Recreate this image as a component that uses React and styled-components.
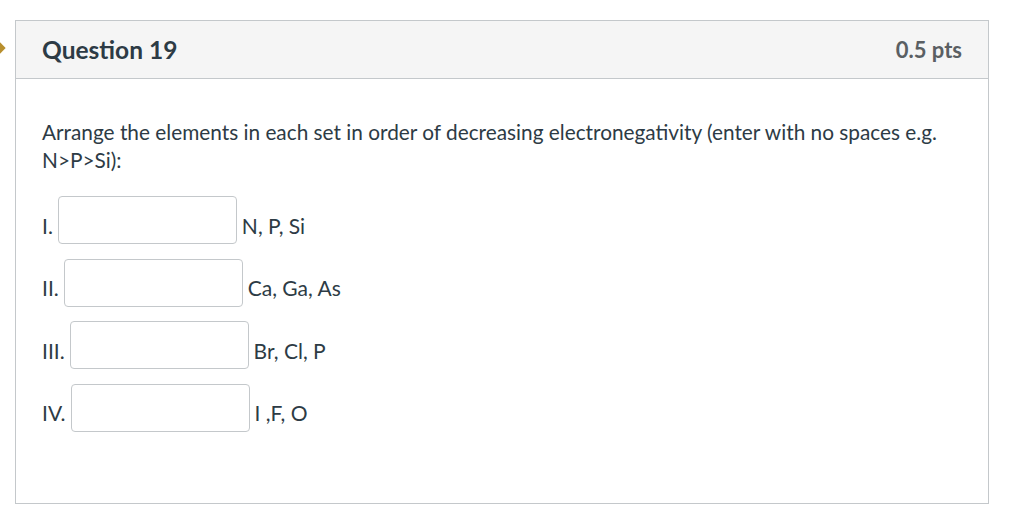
import React from "react";
import styled, { createGlobalStyle } from "styled-components";

const Global = createGlobalStyle`
  html, body { margin: 0; padding: 0; background: #fff; }
  body { font-family: Lato, "Open Sans", sans-serif; color: #2d3b45; }
`;

const Page = styled.div`
  position: relative;
  width: 1024px;
  height: 526px;
  padding: 20px 35px 0 15px;
  box-sizing: border-box;
`;

const Marker = styled.div`
  position: absolute;
  left: -4px;
  top: 44px;
  width: 8px;
  height: 8px;
  background: #b88f2e;
  transform: rotate(45deg);
`;

const Card = styled.section`
  border: 1px solid #c4c8cb;
  height: 484px;
  box-sizing: border-box;
  display: flex;
  flex-direction: column;
`;

const Header = styled.header`
  display: flex;
  justify-content: space-between;
  align-items: center;
  height: 58px;
  padding: 0 26px 0 26px;
  background: #f5f5f5;
  border-bottom: 1px solid #c4c8cb;
  box-sizing: border-box;
`;

const Title = styled.h2`
  margin: 0;
  font-size: 24.5px;
  font-weight: 700;
  color: #2d3b45;
`;

const Points = styled.div`
  font-size: 22px;
  font-weight: 700;
  color: #5a5f63;
`;

const Body = styled.div`
  padding: 39px 26px 0 26px;
`;

const Prompt = styled.p`
  margin: 0 0 22px 0;
  font-size: 20.8px;
  line-height: 28px;
`;

const Rows = styled.div`
  display: flex;
  flex-direction: column;
  gap: 14.5px;
`;

const Row = styled.div`
  display: flex;
  align-items: center;
  gap: 5px;
  font-size: 21px;
`;

const Text = styled.span`
  padding-top: 10px;
`;

const Input = styled.input`
  width: 179px;
  height: 48px;
  box-sizing: border-box;
  border: 1px solid #c4c8cb;
  border-radius: 4px;
  background: #fff;
  font-family: inherit;
  font-size: 17px;
  margin: 0;
`;

const items = [
  ["I.", "N, P, Si"],
  ["II.", "Ca, Ga, As"],
  ["III.", "Br, Cl, P"],
  ["IV.", "I ,F, O"],
];

export default function App() {
  return (
    <>
      <Global />
      <Page>
        <Marker />
        <Card>
          <Header>
            <Title>Question 19</Title>
            <Points>0.5 pts</Points>
          </Header>
          <Body>
            <Prompt>
              Arrange the elements in each set in order of decreasing electronegativity (enter with no spaces e.g. N&gt;P&gt;Si):
            </Prompt>
            <Rows>
              {items.map(([label, text]) => (
                <Row key={label}>
                  <Text>{label}</Text>
                  <Input type="text" />
                  <Text>{text}</Text>
                </Row>
              ))}
            </Rows>
          </Body>
        </Card>
      </Page>
    </>
  );
}
